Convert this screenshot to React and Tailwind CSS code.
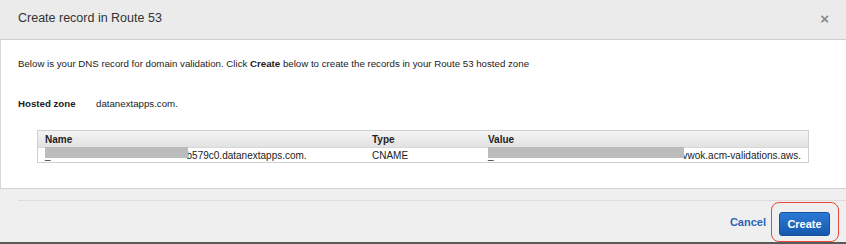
import React from 'react';

const font = { fontFamily: '"Liberation Sans", Arial, sans-serif' };

export default function App() {
  return (
    <div className="w-[846px] h-[244px] bg-white flex flex-col overflow-hidden" style={font}>
      {/* header */}
      <div className="h-[40px] shrink-0 bg-[#ebebeb] border-b border-[#cfcfcf] flex items-center justify-between pl-[18px] pr-[17px]">
        <h1 className="text-[12.5px] text-[#333] pb-[2px]">Create record in Route 53</h1>
        <span className="text-[15px] font-bold text-[#8a8a8a] leading-none pb-[3px]">×</span>
      </div>

      {/* body */}
      <div className="h-[148px] shrink-0 border-l border-[#d6d6d6] pl-[17px] pt-[18px]">
        <p className="text-[9.7px] text-[#222] leading-[12px]">
          Below is your DNS record for domain validation. Click <b>Create</b> below to create the records in your Route 53 hosted zone
        </p>
        <div className="flex items-center mt-[28px] text-[9.7px] text-[#222] leading-[12px]">
          <span className="font-bold w-[78px]">Hosted zone</span>
          <span>datanextapps.com.</span>
        </div>

        <div className="mt-[20px] ml-[19px] w-[772px] border border-[#cfcfcf] text-[10px] text-[#222]">
          <div className="flex h-[17px] items-center font-bold bg-gradient-to-b from-[#f4f4f4] to-[#e2e2e2] border-b border-[#d8d8d8]">
            <span className="w-[334px] pl-[7px]">Name</span>
            <span className="w-[116px]">Type</span>
            <span>Value</span>
          </div>
          <div className="flex h-[14px] items-center">
            <span className="w-[334px] pl-[7px] flex items-center">
              <span className="relative">
                _
                <span className="absolute left-0 top-[-1px] w-[143px] h-[11px] bg-[#bcbcbc]"></span>
              </span>
              <span className="ml-[136px]">b579c0.datanextapps.com.</span>
            </span>
            <span className="w-[116px]">CNAME</span>
            <span className="flex items-center">
              <span className="relative">
                _
                <span className="absolute left-0 top-[-1px] w-[196px] h-[11px] bg-[#bcbcbc]"></span>
              </span>
              <span className="ml-[189px]">vwok.acm-validations.aws.</span>
            </span>
          </div>
        </div>
      </div>

      {/* footer */}
      <div className="flex-1 bg-[#efefef] border-t border-[#d4d4d4] border-b-2 border-b-[#5a5a5a] pl-[18px] pt-[11px]">
        <div className="border-t border-[#dcdcdc] flex items-center justify-end pr-[7px] pt-[1px]">
          <span className="text-[11px] font-bold text-[#2a64b8] mr-[5px]">Cancel</span>
          <div className="border-[1.5px] border-[#e8463a] rounded-[8px] pl-[7px] pr-[8px] pt-[8px] pb-[5px]">
            <button className="w-[51px] h-[24px] rounded-[3px] border border-[#14519c] bg-gradient-to-b from-[#2c7ad6] to-[#1559ad] text-white text-[11px] font-bold">
              Create
            </button>
          </div>
        </div>
      </div>
    </div>
  );
}
